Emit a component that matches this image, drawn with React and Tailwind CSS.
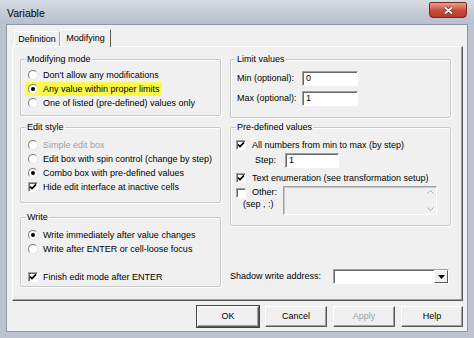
import React from "react"

const sunken =
  "bg-white border border-t-[#a0a0a0] border-l-[#a0a0a0] border-r-white border-b-white shadow-[inset_1px_1px_0_#696969]"

function Radio({ checked }) {
  return (
    <span className="w-[10px] h-[10px] shrink-0 rounded-full bg-white border border-t-[#7d7d7d] border-l-[#7d7d7d] border-r-[#e6e6e6] border-b-[#e6e6e6] flex items-center justify-center">
      {checked && <span className="w-[4px] h-[4px] rounded-full bg-black" />}
    </span>
  )
}

function Check({ checked }) {
  return (
    <span className={`w-[10px] h-[10px] shrink-0 flex items-center justify-center ${sunken}`}>
      {checked && (
        <svg width="8" height="8" viewBox="0 0 8 8">
          <path d="M1 3.6 L3 5.6 L7 1.4" stroke="#000" strokeWidth="1.7" fill="none" />
        </svg>
      )}
    </span>
  )
}

function Row({ icon, children, disabled, className = "" }) {
  return (
    <div className={`h-[14px] flex items-center gap-[5px] ${className}`}>
      {icon}
      <span className={disabled ? "text-[#a0a0a0]" : ""}>{children}</span>
    </div>
  )
}

function Group({ title, className = "", children }) {
  return (
    <div className={`relative border border-[#c9c9c9] rounded-[2px] shadow-[inset_1px_1px_0_#fff,1px_1px_0_#fff] ${className}`}>
      <span className="absolute -top-[6px] left-[5px] px-[1px] bg-[#f0f0f0] leading-[11px]">{title}</span>
      {children}
    </div>
  )
}

function Button({ children, disabled, def }) {
  return (
    <div
      className={`w-[62px] h-[21px] flex items-center justify-center bg-[#f0f0f0] border border-t-white border-l-white border-r-[#5a5a5a] border-b-[#5a5a5a] shadow-[inset_-1px_-1px_0_#a0a0a0] ${
        def ? "outline outline-1 outline-[#444]" : ""
      } ${disabled ? "text-[#a0a0a0]" : ""}`}
    >
      {children}
    </div>
  )
}

export default function App() {
  return (
    <div className="w-[474px] h-[338px] bg-[#bcc3ce] flex flex-col font-['Liberation_Sans',Arial,sans-serif] text-[9px] text-black leading-none overflow-hidden">
      {/* title bar */}
      <div className="h-[24px] shrink-0 flex items-start bg-gradient-to-b from-[#d6dbe3] via-[#c6ccd6] to-[#b8bfcb]">
        <span className="ml-[7px] mt-[8px] text-[10.5px] text-black">Variable</span>
        <div className="ml-auto mr-[7px] mt-[2px] w-[38px] h-[16px] rounded-b-[4px] rounded-t-[2px] border border-[#7a2a22] bg-gradient-to-b from-[#e6a08e] via-[#c9503c] to-[#b33a28] flex items-center justify-center">
          <svg width="11" height="9" viewBox="0 0 11 9">
            <path d="M2 1.5 L9 7.5 M9 1.5 L2 7.5" stroke="#6b2a20" strokeWidth="3.2" fill="none" />
            <path d="M2 1.5 L9 7.5 M9 1.5 L2 7.5" stroke="#fff" strokeWidth="1.8" fill="none" />
          </svg>
        </div>
      </div>

      {/* client */}
      <div className="mx-[6px] w-[462px] h-[308px] bg-[#f0f0f0] border border-[#8e97a4] pl-[5px] pt-[4px] flex flex-col">
        {/* tabs */}
        <div className="h-[17px] flex items-end pl-[2px]">
          <div className="h-[15px] w-[46px] flex items-center justify-center border border-b-0 border-t-white border-l-white border-r-[#a0a0a0] bg-[#f0f0f0]">
            Definition
          </div>
          <div className="relative z-10 -mb-[1px] h-[18px] w-[51px] flex items-center justify-center border border-b-0 border-t-white border-l-white border-r-[#5a5a5a] bg-[#f0f0f0] pb-[1px]">
            Modifying
          </div>
        </div>

        {/* panel */}
        <div className="w-[451px] h-[255px] border border-t-white border-l-white border-r-[#5a5a5a] border-b-[#5a5a5a] shadow-[inset_-1px_-1px_0_#a0a0a0] pl-[7px] pt-[12px] flex gap-[9px]">
          {/* left column */}
          <div className="w-[201px] flex flex-col">
            <Group title="Modifying mode" className="h-[57px] pt-[8px] pl-[7px]">
              <Row icon={<Radio />}>Don't allow any modifications</Row>
              <Row icon={<Radio checked />} className="-ml-[3px] pl-[3px] w-[137px] bg-[#fbf94c]">
                Any value within proper limits
              </Row>
              <Row icon={<Radio />}>One of listed (pre-defined) values only</Row>
            </Group>

            <Group title="Edit style" className="mt-[11px] h-[76px] pt-[10px] pl-[7px]">
              <Row icon={<Radio />} disabled>Simple edit box</Row>
              <Row icon={<Radio />}>Edit box with spin control (change by step)</Row>
              <Row icon={<Radio checked />}>Combo box with pre-defined values</Row>
              <Row icon={<Check checked />}>Hide edit interface at inactive cells</Row>
            </Group>

            <Group title="Write" className="mt-[14px] h-[70px] pt-[10px] pl-[7px]">
              <Row icon={<Radio checked />}>Write immediately after value changes</Row>
              <Row icon={<Radio />}>Write after ENTER or cell-loose focus</Row>
              <Row icon={<Check checked />} className="mt-[14px]">Finish edit mode after ENTER</Row>
            </Group>
          </div>

          {/* right column */}
          <div className="w-[221px] flex flex-col">
            <Group title="Limit values" className="h-[59px] pt-[11px] pl-[6px]">
              <div className="h-[14px] flex items-center">
                <span className="w-[65px]">Min (optional):</span>
                <div className={`w-[56px] h-[15px] pl-[3px] flex items-center ${sunken}`}>0</div>
              </div>
              <div className="mt-[6px] h-[14px] flex items-center">
                <span className="w-[65px]">Max (optional):</span>
                <div className={`w-[56px] h-[15px] pl-[3px] flex items-center ${sunken}`}>1</div>
              </div>
            </Group>

            <Group title="Pre-defined values" className="mt-[9px] h-[99px] pt-[10px] pl-[5px]">
              <div className="h-[14px] flex items-center gap-[6px]">
                <Check checked />
                <span>All numbers from min to max (by step)</span>
              </div>
              <div className="mt-[1px] h-[14px] flex items-center pl-[19px]">
                <span className="w-[30px]">Step:</span>
                <div className={`w-[54px] h-[15px] pl-[3px] flex items-center ${sunken}`}>1</div>
              </div>
              <div className="mt-[4px] h-[14px] flex items-center gap-[6px]">
                <Check checked />
                <span>Text enumeration (see transformation setup)</span>
              </div>
              <div className="flex items-start">
                <div className="w-[47px] flex flex-col">
                  <div className="h-[13px] flex items-center gap-[6px] mt-[1px]">
                    <Check />
                    <span>Other:</span>
                  </div>
                  <span className="pl-[7px] leading-[10px]">(sep , :)</span>
                </div>
                <div className="mt-[1px] w-[154px] h-[29px] flex justify-end bg-[#f0f0f0] border border-t-[#a0a0a0] border-l-[#a0a0a0] border-r-white border-b-white shadow-[inset_1px_1px_0_#c8c8c8]">
                  <div className="w-[12px] flex flex-col justify-between items-center py-[3px] text-[#a0a0a0]">
                    <svg width="7" height="4" viewBox="0 0 7 4"><path d="M0.5 3.5 L3.5 0.5 L6.5 3.5" stroke="#a8a8a8" fill="none" /></svg>
                    <svg width="7" height="4" viewBox="0 0 7 4"><path d="M0.5 0.5 L3.5 3.5 L6.5 0.5" stroke="#a8a8a8" fill="none" /></svg>
                  </div>
                </div>
              </div>
            </Group>

            <div className="mt-[43px] h-[15px] flex items-center">
              <span className="w-[103px]">Shadow write address:</span>
              <div className={`w-[116px] h-[15px] flex justify-end ${sunken}`}>
                <div className="w-[14px] h-full flex items-center justify-center bg-[#f0f0f0] border border-t-white border-l-white border-r-[#5a5a5a] border-b-[#5a5a5a]">
                  <svg width="7" height="4" viewBox="0 0 7 4"><path d="M0 0 L7 0 L3.5 4 Z" fill="#000" /></svg>
                </div>
              </div>
            </div>
          </div>
        </div>

        {/* buttons */}
        <div className="mt-[5px] w-[451px] flex justify-end gap-[6px]">
          <Button def>OK</Button>
          <Button>Cancel</Button>
          <Button disabled>Apply</Button>
          <Button>Help</Button>
        </div>
      </div>
    </div>
  )
}
